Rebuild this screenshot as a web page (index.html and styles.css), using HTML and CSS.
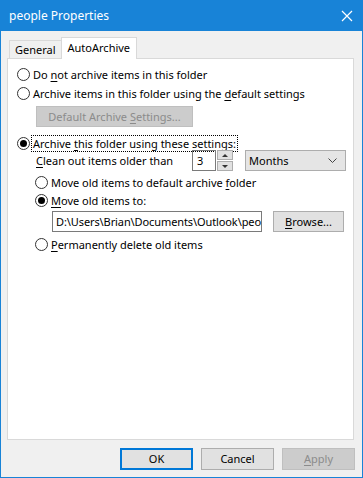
FILE: index.html
```html
<!DOCTYPE html>
<html lang="en">
<head>
    <meta charset="UTF-8">
    <title>people Properties</title>
    <link rel="stylesheet" href="styles.css">
</head>
<body>
    <div class="window">
        <div class="title-bar">
            <span class="title">people Properties</span>
            <svg class="close" width="12" height="12" viewBox="0 0 12 12">
                <path d="M1 1 L11 11 M11 1 L1 11" stroke="#fff" stroke-width="1.2" fill="none"/>
            </svg>
        </div>

        <div class="tabs">
            <div class="tab">General</div>
            <div class="tab active">AutoArchive</div>
        </div>

        <div class="panel">
            <div class="row top-row">
                <span class="radio"></span>
                <span>Do <u>n</u>ot archive items in this folder</span>
            </div>
            <div class="row">
                <span class="radio"></span>
                <span>Archive items in this folder using the <u>d</u>efault settings</span>
            </div>
            <div class="default-btn">Default Archive <u>S</u>ettings...</div>

            <div class="row focus-row">
                <span class="radio checked"></span>
                <span class="focus">Archive <u>t</u>his folder using these settings:</span>
            </div>

            <div class="sub">
                <div class="clean-row">
                    <span class="clean-label"><u>C</u>lean out items older than</span>
                    <div class="spin">
                        <div class="spin-input">3</div>
                        <div class="spin-btns">
                            <div class="spin-btn"><span class="arrow up"></span></div>
                            <div class="spin-btn"><span class="arrow down"></span></div>
                        </div>
                    </div>
                    <div class="combo">
                        <span>Months</span>
                        <svg width="9" height="6" viewBox="0 0 9 6">
                            <path d="M0.5 0.5 L4.5 4.5 L8.5 0.5" stroke="#444" stroke-width="1" fill="none"/>
                        </svg>
                    </div>
                </div>

                <div class="row sub-row first">
                    <span class="radio"></span>
                    <span>Move old items to default archive <u>f</u>older</span>
                </div>
                <div class="row sub-row">
                    <span class="radio checked"></span>
                    <span><u>M</u>ove old items to:</span>
                </div>
                <div class="path-row">
                    <div class="path-input">D:\Users\Brian\Documents\Outlook\peo</div>
                    <div class="browse-btn"><u>B</u>rowse...</div>
                </div>
                <div class="row sub-row last">
                    <span class="radio"></span>
                    <span><u>P</u>ermanently delete old items</span>
                </div>
            </div>
        </div>

        <div class="footer">
            <div class="btn default">OK</div>
            <div class="btn">Cancel</div>
            <div class="btn disabled"><u>A</u>pply</div>
        </div>
    </div>
</body>
</html>
```

FILE: styles.css
```css
* {
    margin: 0;
    padding: 0;
    box-sizing: border-box;
}

body {
    font-family: 'Noto Sans', 'Open Sans', sans-serif;
    font-size: 11px;
    color: #000;
    background: #fff;
}

u {
    text-decoration: underline;
    text-underline-offset: 2px;
}

.window {
    width: 363px;
    height: 478px;
    border: 1px solid #1883d7;
    border-top: none;
    background-color: #f0f0f0;
    display: flex;
    flex-direction: column;
}

.title-bar {
    height: 31px;
    background-color: #1883d7;
    color: #fff;
    display: flex;
    align-items: center;
    justify-content: space-between;
    padding: 0 10px 0 9px;
    margin: 0 -1px;
}

.title {
    font-size: 12px;
}

.tabs {
    display: flex;
    align-items: flex-end;
    height: 27px;
    padding-left: 8px;
    position: relative;
    z-index: 1;
}

.tab {
    height: 18px;
    padding: 0 5px;
    border: 1px solid #d9d9d9;
    border-bottom: none;
    background-color: #f0f0f0;
    line-height: 17px;
}

.tab.active {
    height: 22px;
    margin-left: -1px;
    padding: 0 6px;
    background-color: #fff;
    line-height: 20px;
    margin-bottom: -1px;
}

.panel {
    margin: 0 8px 0 6px;
    height: 382px;
    background-color: #fff;
    border: 1px solid #d9d9d9;
    padding: 6px 0 0 9px;
}

.row {
    height: 19px;
    display: flex;
    align-items: center;
}

.radio {
    width: 13px;
    height: 13px;
    border: 1px solid #333;
    border-radius: 50%;
    margin-right: 3px;
    flex-shrink: 0;
    display: flex;
    align-items: center;
    justify-content: center;
    background-color: #fff;
}

.radio.checked::after {
    content: "";
    width: 7px;
    height: 7px;
    border-radius: 50%;
    background-color: #000;
}

.default-btn {
    width: 157px;
    height: 21px;
    margin: 3px 0 0 19px;
    background-color: #cccccc;
    border: 1px solid #bfbfbf;
    color: #8b8b8b;
    text-align: center;
    line-height: 19px;
}

.focus-row {
    height: 13px;
    margin-top: 10px;
}

.focus {
    outline: 1px dotted #000;
    outline-offset: 1px;
    line-height: 13px;
}

.sub {
    padding-left: 18px;
}

.clean-row {
    display: flex;
    align-items: center;
    height: 21px;
    padding-left: 1px;
}

.clean-label {
    width: 156px;
}

.spin {
    display: flex;
    height: 21px;
}

.spin-input {
    width: 24px;
    height: 21px;
    border: 1px solid #7a7a7a;
    padding-left: 4px;
    line-height: 19px;
}

.spin-btns {
    width: 16px;
    display: flex;
    flex-direction: column;
    margin-left: 1px;
}

.spin-btn {
    height: 10px;
    border: 1px solid #adadad;
    background-color: #e1e1e1;
    display: flex;
    align-items: center;
    justify-content: center;
}

.spin-btn + .spin-btn {
    margin-top: 1px;
}

.arrow {
    width: 0;
    height: 0;
    border-left: 3px solid transparent;
    border-right: 3px solid transparent;
}

.arrow.up {
    border-bottom: 3px solid #333;
}

.arrow.down {
    border-top: 3px solid #333;
}

.combo {
    width: 101px;
    height: 21px;
    margin-left: 12px;
    border: 1px solid #adadad;
    background-color: #e5e5e5;
    display: flex;
    align-items: center;
    justify-content: space-between;
    padding: 0 8px 0 3px;
}

.sub-row {
    height: 18px;
}

.sub-row.first {
    margin-top: 2px;
}

.sub-row.last {
    margin-top: 3px;
}

.path-row {
    display: flex;
    margin-top: 2px;
    padding-left: 17px;
    height: 21px;
}

.path-input {
    width: 210px;
    height: 21px;
    border: 1px solid #7a7a7a;
    padding-left: 3px;
    line-height: 19px;
    letter-spacing: -0.1px;
    white-space: nowrap;
}

.browse-btn {
    width: 71px;
    height: 21px;
    margin-left: 11px;
    border: 1px solid #adadad;
    background-color: #e1e1e1;
    text-align: center;
    line-height: 19px;
}

.footer {
    display: flex;
    justify-content: flex-end;
    gap: 8px;
    padding: 8px 7px 0 0;
}

.btn {
    width: 73px;
    height: 22px;
    border: 1px solid #adadad;
    background-color: #e1e1e1;
    text-align: center;
    line-height: 20px;
}

.btn.default {
    border: 2px solid #0078d7;
    line-height: 18px;
}

.btn.disabled {
    background-color: #cccccc;
    border-color: #bfbfbf;
    color: #8b8b8b;
}
```
